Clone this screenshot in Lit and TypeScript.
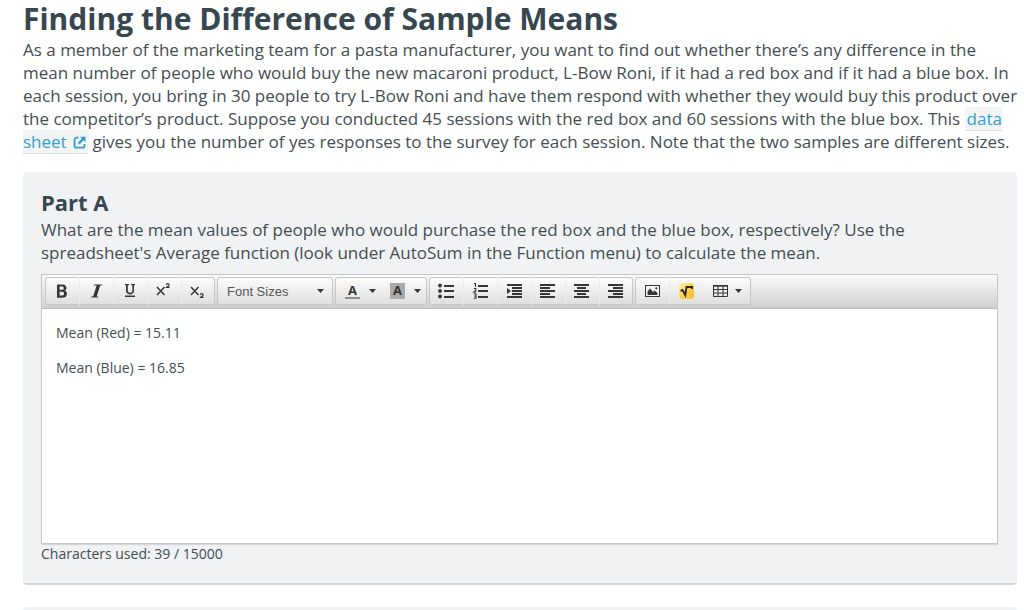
import { LitElement, html, css, svg } from "lit";
import { customElement, state } from "lit/decorators.js";

const icon = (body: unknown, w = 18, h = 18) =>
  html`<svg width=${w} height=${h} viewBox="0 0 ${w} ${h}" aria-hidden="true">${body}</svg>`;

const bars = (rows: number[][]) =>
  rows.map(([x, y, w]) => svg`<rect x=${x} y=${y} width=${w} height="2" />`);

const ICONS = {
  bold: icon(svg`<path fill-rule="evenodd" d="M4 2.500h5.400c2.600 0 4 1.300 4 3.400 0 1.400-.7 2.300-1.900 2.700 1.500.3 2.400 1.500 2.400 3.100 0 2.600-1.600 4-4.300 4H4zM6.600 4.600v3.200h2.300c1.200 0 1.800-.6 1.800-1.600s-.6-1.600-1.800-1.600zM6.600 9.800v3.700h2.500c1.300 0 2-.7 2-1.800s-.7-1.900-2-1.900z"/>`),
  italic: icon(svg`<path d="M6 2.500h8l-.3 1h-1.500L8.700 14.500h1.600l-.3 1H3l.3-1h1.800L8.600 3.500H5.700z"/>`),
  underline: icon(svg`<path d="M3 2h4v1.200H5.800v5.300c0 1.500.8 2.200 2.300 2.200s2.300-.7 2.300-2.200V3.200H9.200V2H13v1.200h-1v5.400c0 2.500-1.500 3.800-4 3.800s-4-1.300-4-3.800V3.200H3zM3 13.500h10V15H3z"/>`),
  sup: icon(svg`<path d="M1 5l7.500 8M8.500 5L1 13" fill="none" stroke="currentColor" stroke-width="1.500"/><path d="M10.300 3c.2-2 3-1.700 2.800-.1-.1 1-1.600 1.500-2.600 2.500h3.100" fill="none" stroke="currentColor" stroke-width="1.100"/>`),
  sub: icon(svg`<path d="M1 5l7.500 8M8.500 5L1 13" fill="none" stroke="currentColor" stroke-width="1.500"/><path d="M10.300 13c.2-2 3-1.700 2.800-.1-.1 1-1.600 1.500-2.600 2.500h3.100" fill="none" stroke="currentColor" stroke-width="1.100"/>`),
  bullets: icon(svg`<circle cx="3" cy="3.500" r="1.900"/><circle cx="3" cy="9" r="1.900"/><circle cx="3" cy="14.500" r="1.900"/>${bars([[7, 3, 10], [7, 8, 10], [7, 14, 10]])}`),
  numbers: icon(svg`<path d="M2 1.500h1.500V5M1.800 6.500h2v2l-2 1.500h2.400M1.800 11.700h2.200v4.500H1.800M2 14h2" fill="none" stroke="currentColor" stroke-width="1.100"/>${bars([[6, 3, 10], [6, 8, 10], [6, 14, 10]])}`),
  indent: icon(svg`<path d="M1 6l4 3-4 3z"/>${bars([[1, 2, 15], [6, 5, 10], [6, 8, 10], [6, 11, 10], [1, 14, 15]])}`),
  left: icon(bars([[0, 2, 15], [0, 5, 10], [0, 8, 15], [0, 11, 10], [0, 14, 15]])),
  center: icon(bars([[0, 2, 15], [3, 5, 9], [0, 8, 15], [3, 11, 9], [0, 14, 15]])),
  right: icon(bars([[0, 2, 15], [5, 5, 10], [0, 8, 15], [5, 11, 10], [0, 14, 15]])),
  image: icon(svg`<rect x="2.500" y="3.500" width="14" height="11" fill="#f4f4f4" stroke="currentColor"/><path d="M4.500 13V9.500l2.500-3 3 3.500 1.500-1.500 3 2.500v2z"/><circle cx="13.300" cy="6.300" r="1.100"/>`),
  formula: icon(svg`<defs><linearGradient id="gold" x1="0" y1="0" x2="1" y2="1"><stop offset="0" stop-color="#fff0b8"/><stop offset=".5" stop-color="#ffd34d"/><stop offset="1" stop-color="#f8b62c"/></linearGradient></defs><rect x="1" y="1" width="15" height="16" rx="3" fill="url(#gold)"/><path d="M2.500 9l2-1 2.800 5L8.500 5H14v2" fill="none" stroke="#2b2b2b" stroke-width="1.900"/>`),
  table: icon(svg`<path d="M1.500 3.500h14v11h-14zM1.500 7.500h14M1.500 11h14M6 3.500v11M11 3.500v11" fill="none" stroke="currentColor"/><path d="M1 3h15v1.700H1z"/>`),
};

const caret = html`<svg class="caret" width="7" height="4" viewBox="0 0 7 4" aria-hidden="true"><path d="M0 0h7L3.500 4z"/></svg>`;

@customElement("rich-editor")
export class RichEditor extends LitElement {
  static styles = css`
    :host {
      display: block;
      border: 1px solid #c5c7c8;
      background: #fff;
      box-shadow: 0 1px 1px #d5d7d9;
    }
    .toolbar {
      display: flex;
      flex-wrap: wrap;
      gap: 2px;
      padding: 2px 3px 3px;
      border-bottom: 1px solid #bcbcbc;
      background: linear-gradient(#fbfbfb, #cecece);
    }
    .group {
      display: flex;
      height: 28px;
      border-radius: 3px;
      background: linear-gradient(#fdfdfd, #dedede);
      box-shadow: inset 0 0 0 1px #c6c6c6;
    }
    button {
      display: flex;
      align-items: center;
      justify-content: center;
      gap: 9px;
      width: 34px;
      padding: 0;
      border: 0;
      background: none;
      color: #363636;
      fill: currentColor;
    }
    .plain + .plain {
      border-left: 1px solid #ebebeb;
    }
    .colors {
      padding-right: 2px;
    }
    .color {
      justify-content: flex-start;
      width: 45px;
      padding-left: 10px;
    }
    .grid {
      gap: 5px;
      width: 48px;
    }
    .caret {
      fill: #363636;
    }
    .letter {
      width: 15px;
      border-bottom: 2px solid #8c8c8c;
      font: bold 13px/14px "Open Sans", sans-serif;
    }
    .filled {
      border-color: #aaa;
      background: #aaa;
    }
    .sizes {
      display: grid;
      align-items: center;
      width: 116px;
    }
    .sizes > * {
      grid-area: 1 / 1;
    }
    .sizes .caret {
      justify-self: end;
      margin-right: 9px;
      pointer-events: none;
    }
    select {
      width: 100%;
      height: 28px;
      padding: 0 24px 0 10px;
      border: 0;
      appearance: none;
      background: none;
      color: #555;
      font: 13px "Liberation Sans", sans-serif;
    }
    textarea {
      display: block;
      box-sizing: border-box;
      width: 100%;
      height: 234px;
      padding: 6px 14px;
      border: 0;
      outline: 0;
      resize: none;
      background: #fff;
      color: #444e51;
      font: 14px/35px "Open Sans", sans-serif;
    }
  `;

  @state() private text = "Mean (Red) = 15.11\nMean (Blue) = 16.85";

  private plain(name: string, key: keyof typeof ICONS) {
    return html`<button class="plain" type="button" aria-label=${name}>${ICONS[key]}</button>`;
  }

  render() {
    return html`
      <div class="toolbar" role="toolbar" aria-label="Formatting">
        <div class="group">
          ${this.plain("Bold", "bold")}${this.plain("Italic", "italic")}${this.plain("Underline", "underline")}
          ${this.plain("Superscript", "sup")}${this.plain("Subscript", "sub")}
        </div>
        <div class="group sizes">
          <select aria-label="Font Sizes"><option>Font Sizes</option></select>
          ${caret}
        </div>
        <div class="group colors">
          <button class="color" type="button" aria-label="Text color"><span class="letter">A</span>${caret}</button>
          <button class="color" type="button" aria-label="Background color"><span class="letter filled">A</span>${caret}</button>
        </div>
        <div class="group">
          ${this.plain("Bullet list", "bullets")}${this.plain("Numbered list", "numbers")}${this.plain("Increase indent", "indent")}
          ${this.plain("Align left", "left")}${this.plain("Align center", "center")}${this.plain("Align right", "right")}
        </div>
        <div class="group">
          ${this.plain("Insert image", "image")}${this.plain("Insert equation", "formula")}
          <button class="grid" type="button" aria-label="Table">${ICONS.table}${caret}</button>
        </div>
      </div>
      <textarea aria-label="Part A answer" spellcheck="false" .value=${this.text}
        @input=${(e: Event) => (this.text = (e.target as HTMLTextAreaElement).value)}></textarea>
    `;
  }
}

@customElement("app-root")
export class AppRoot extends LitElement {
  static styles = css`
    :host {
      display: block;
      height: 100vh;
      overflow: hidden;
      background: #fff;
      color: #444e51;
      font: 17px/23px "Open Sans", sans-serif;
    }
    main {
      padding: 0 2px 0 23px;
    }
    h1,
    h2,
    p {
      margin: 0;
    }
    h1,
    h2 {
      color: #37474f;
    }
    h1 {
      font-size: 30px;
      line-height: 38px;
    }
    h2 {
      font-size: 22px;
      line-height: 31px;
    }
    a {
      padding-left: 2px;
      border-bottom: 1px solid #e0e3e4;
      background: #f3f5f5;
      color: #2e9fd0;
      text-decoration: none;
    }
    .open {
      margin: 0 2px 0 2px;
      vertical-align: -1px;
    }
    .panel {
      margin: 19px 5px 0 0;
      padding: 15px 19px 19px 18px;
      border-bottom: 2px solid #d3d6d8;
      border-radius: 4px;
      background: #f0f2f4;
    }
    .next {
      margin-top: 22px;
    }
    rich-editor {
      margin-top: 10px;
    }
    .count {
      font-size: 14px;
      line-height: 20px;
    }
  `;

  render() {
    return html`
      <main>
        <h1>Finding the Difference of Sample Means</h1>
        <p>
          As a member of the marketing team for a pasta manufacturer, you want to find out whether there’s any difference in the
          mean number of people who would buy the new macaroni product, L-Bow Roni, if it had a red box and if it had a blue box. In
          each session, you bring in 30 people to try L-Bow Roni and have them respond with whether they would buy this product over
          the competitor’s product. Suppose you conducted 45 sessions with the red box and 60 sessions with the blue box. This
          <a href="#data">data sheet <svg class="open" width="13" height="13" viewBox="0 0 13 13" aria-hidden="true"><path d="M5.500 1.700H3.500a2 2 0 0 0-2 2v6a2 2 0 0 0 2 2h6a2 2 0 0 0 2-2V8" fill="none" stroke="#2e9fd0" stroke-width="1.800"/><path d="M7 .7h5.500v5.500l-1.900-1.900-4.100 4.100-1.700-1.700 4.100-4.100z" fill="#2e9fd0"/></svg></a>
          gives you the number of yes responses to the survey for each session. Note that the two samples are different sizes.
        </p>
        <section class="panel">
          <h2>Part A</h2>
          <p>
            What are the mean values of people who would purchase the red box and the blue box, respectively? Use the
            spreadsheet's Average function (look under AutoSum in the Function menu) to calculate the mean.
          </p>
          <rich-editor></rich-editor>
          <p class="count">Characters used: 39 / 15000</p>
        </section>
        <section class="panel next"></section>
      </main>
    `;
  }
}
